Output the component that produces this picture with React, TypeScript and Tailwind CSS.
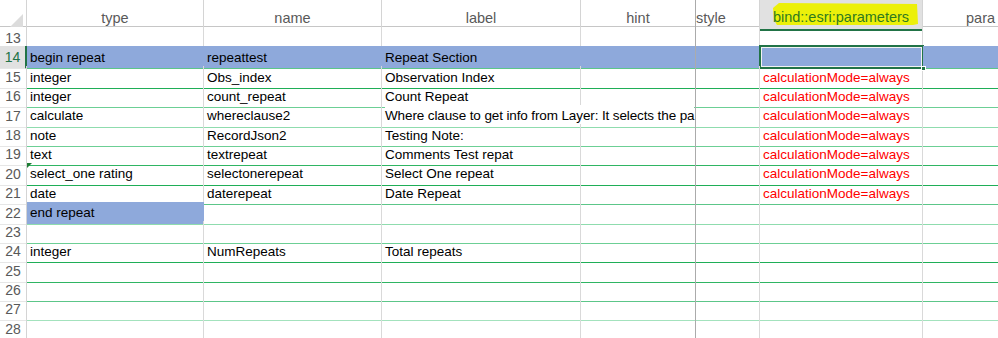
import React from "react";

type Row = {
  n: number;
  type?: string;
  name?: string;
  label?: string;
  bind?: string;
  line: string;
};

const CALC = "calculationMode=always";

const ROWS: Row[] = [
  { n: 13, line: "border-b-[#8fdcae]" },
  { n: 14, type: "begin repeat", name: "repeattest", label: "Repeat Section", line: "border-b-[#5cc689]" },
  { n: 15, type: "integer", name: "Obs_index", label: "Observation Index", bind: CALC, line: "border-b-[#1fae57]" },
  { n: 16, type: "integer", name: "count_repeat", label: "Count Repeat", bind: CALC, line: "border-b-[#6ccf95]" },
  { n: 17, type: "calculate", name: "whereclause2", label: "Where clause to get info from Layer: It selects the pa", bind: CALC, line: "border-b-[#8fdcae]" },
  { n: 18, type: "note", name: "RecordJson2", label: "Testing Note:", bind: CALC, line: "border-b-[#6ccf95]" },
  { n: 19, type: "text", name: "textrepeat", label: "Comments Test repat", bind: CALC, line: "border-b-[#2fb563]" },
  { n: 20, type: "select_one rating", name: "selectonerepeat", label: "Select One repeat", bind: CALC, line: "border-b-[#1fae57]" },
  { n: 21, type: "date", name: "daterepeat", label: "Date Repeat", bind: CALC, line: "border-b-[#5cc689]" },
  { n: 22, type: "end repeat", line: "border-b-[#8fdcae]" },
  { n: 23, line: "border-b-[#6ccf95]" },
  { n: 24, type: "integer", name: "NumRepeats", label: "Total repeats", line: "border-b-[#1fae57]" },
  { n: 25, line: "border-b-[#2fb563]" },
  { n: 26, line: "border-b-[#5cc689]" },
  { n: 27, line: "border-b-[#a3e2bd]" },
  { n: 28, line: "border-b-[#1fae57]" },
];

const COLS = "grid-cols-[27px_177px_178px_199px_115px_64px_163px_75px]";

function Cell({ children, className = "" }: { children?: React.ReactNode; className?: string }) {
  return (
    <div className={`relative flex items-end overflow-hidden whitespace-nowrap pl-[3px] ${className}`}>
      {children}
    </div>
  );
}

export default function App() {
  return (
    <div className="w-[998px] h-[338px] overflow-hidden bg-white text-[13.5px] text-black" style={{ fontFamily: '"Liberation Sans", Arial, sans-serif' }}>
      {/* column headers */}
      <div className={`grid ${COLS} h-[27px] border-b border-[#c6c6c6] text-[14.5px] text-[#595959]`}>
        <div className="relative border-r border-[#d4d4d4]">
          <div className="absolute right-[3px] bottom-[3px] w-0 h-0 border-l-[13px] border-l-transparent border-b-[13px] border-b-[#dcdcdc]" />
        </div>
        <div className="flex items-center justify-center pt-[7px] border-r border-[#d4d4d4]">type</div>
        <div className="flex items-center justify-center pt-[7px] border-r border-[#d4d4d4]">name</div>
        <div className="flex items-center justify-center pt-[7px] border-r border-[#d4d4d4]">label</div>
        <div className="flex items-center justify-center pt-[7px] border-r border-[#ababab]">hint</div>
        <div className="flex items-center pt-[7px] border-r border-[#d4d4d4]">style</div>
        <div className="relative flex items-center justify-center pt-[7px] bg-[#e1e1e1] border-r border-[#d4d4d4] border-b-2 border-b-[#217346] -mb-px text-[#2f7a1f]">
          <svg className="absolute left-[11px] top-[2px]" width="148" height="24" viewBox="0 0 148 24">
            <path d="M2 6 L8 1 L146 2 L147 22 L142 23 L6 23 L3 18 Z" fill="#ecf00a" />
          </svg>
          <span className="relative">bind::esri:parameters</span>
        </div>
        <div className="flex items-center pl-[43px] pt-[7px] overflow-hidden whitespace-nowrap">para</div>
      </div>

      {ROWS.map((r) => {
        const sel = r.n === 14;
        const blueAll = sel ? "bg-[#8ea9db]" : "";
        const grid = sel ? "border-r border-r-[#8ea9db]" : "border-r border-r-[#d9d9d9]";
        const long = !!r.label && r.label.length > 30;
        return (
          <div key={r.n} className={`grid ${COLS} h-[19.4px]`}>
            <div
              className={`flex items-center justify-center pt-[1px] text-[14px] border-b border-b-[#e6e6e6] ${
                sel ? "bg-[#e1e1e1] text-[#217346] border-r-2 border-r-[#217346]" : "text-[#595959] border-r border-r-[#d4d4d4]"
              }`}
            >
              {r.n}
            </div>
            <Cell className={`${r.line} border-b ${r.n === 22 ? "bg-[#8ea9db] border-r border-r-[#8ea9db]" : `${blueAll} ${grid}`}`}>
              {r.n === 20 && (
                <div className="absolute left-0 top-0 w-0 h-0 border-t-[5px] border-t-[#1e7b34] border-r-[5px] border-r-transparent" />
              )}
              {r.type}
            </Cell>
            <Cell className={`${r.line} border-b ${blueAll} ${grid}`}>{r.name}</Cell>
            <div
              className={`relative z-10 flex items-end whitespace-nowrap pl-[3px] ${r.line} border-b ${blueAll} ${
                sel ? "border-r border-r-[#8ea9db]" : long ? "border-r border-r-white" : "border-r border-r-[#d9d9d9]"
              }`}
            >
              <span className={`block shrink-0 ${long ? "tracking-[-0.12px] bg-white" : ""}`}>{r.label}</span>
            </div>
            <Cell className={`${r.line} border-b ${blueAll} border-r border-r-[#ababab]`}></Cell>
            <Cell className={`${r.line} border-b ${blueAll} ${grid}`}></Cell>
            {sel ? (
              <div className={`relative ${r.line} border-b bg-[#8ea9db]`}>
                <div className="absolute -top-px -left-px -right-px -bottom-px border-2 border-[#217346]">
                  <div className="w-full h-full border border-[#f2f2f2]" />
                </div>
                <div className="absolute -right-[3px] -bottom-[3px] w-[5px] h-[5px] bg-[#217346] border border-white z-10" />
              </div>
            ) : (
              <Cell className={`${r.line} border-b ${grid} text-[#ff0000]`}>{r.bind}</Cell>
            )}
            <Cell className={`${r.line} border-b ${blueAll}`}></Cell>
          </div>
        );
      })}
    </div>
  );
}
